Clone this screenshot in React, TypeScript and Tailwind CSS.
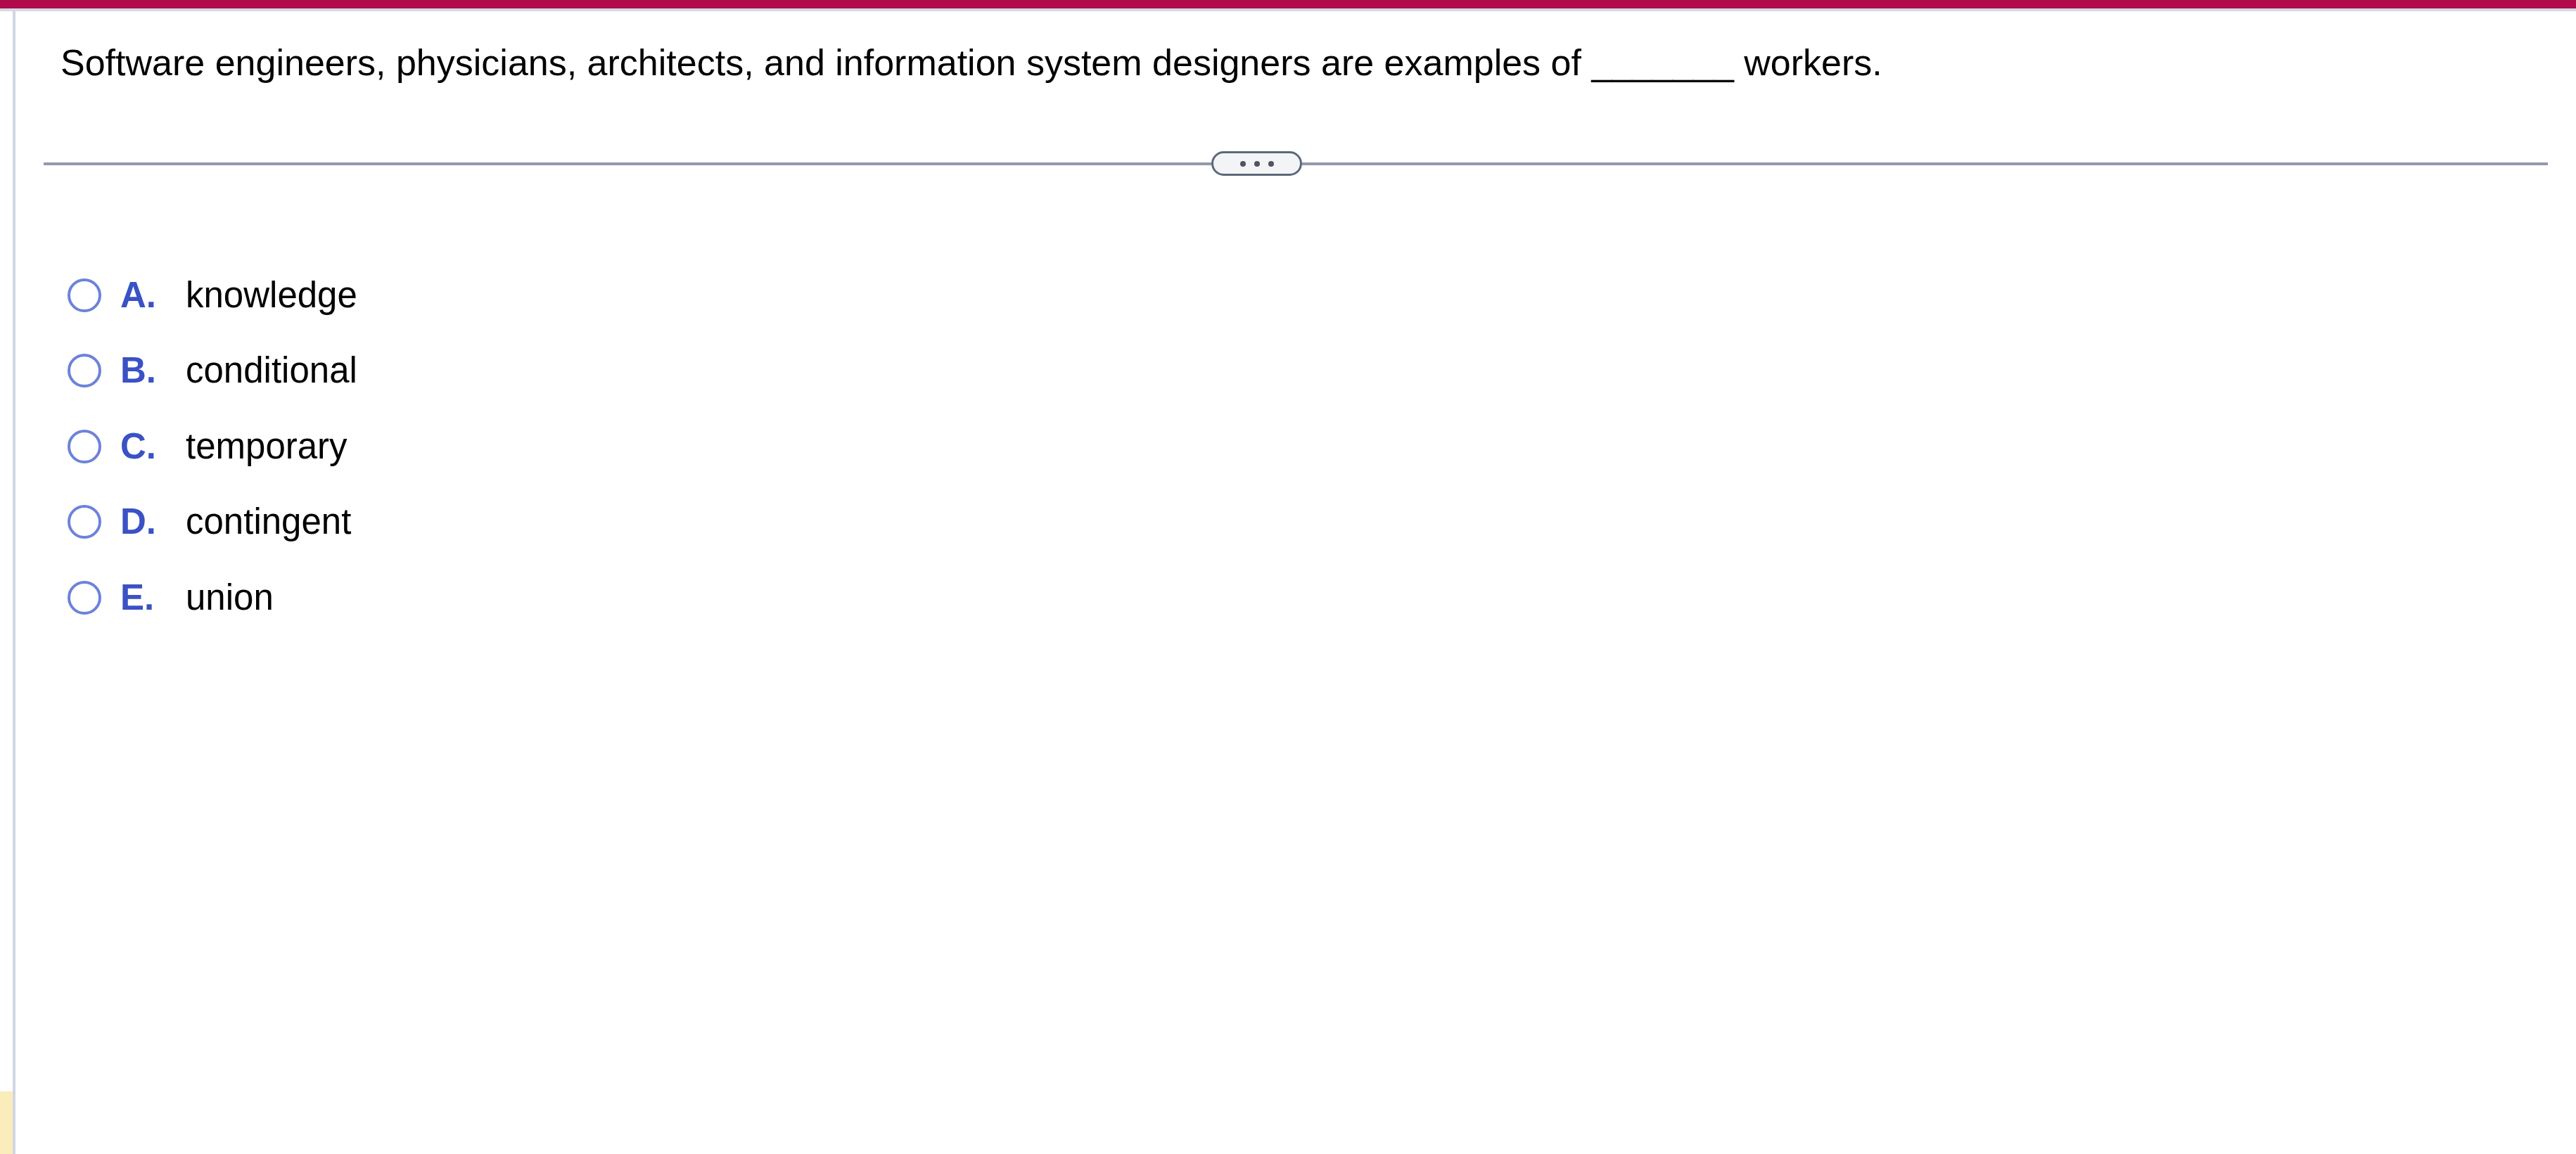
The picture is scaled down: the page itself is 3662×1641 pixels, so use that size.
// Multiple-choice question page: brand bar, left rail, question stem,
// collapsible divider and the lettered radio options.

const options = [
  { letter: "A.", text: "knowledge" },
  { letter: "B.", text: "conditional" },
  { letter: "C.", text: "temporary" },
  { letter: "D.", text: "contingent" },
  { letter: "E.", text: "union" },
];

function Divider() {
  return (
    <div className="flex h-[35px] items-center">
      <div className="h-[4px] w-[1660px] bg-[#9199ad]" />
      <button
        type="button"
        aria-label="Show more"
        className="flex h-[35px] w-[129px] shrink-0 items-center justify-center gap-[12px] rounded-full border-[3px] border-[#5d6879] bg-[#f3f4f6]"
      >
        <span className="h-[8px] w-[8px] rounded-full bg-[#4f5560]" />
        <span className="h-[8px] w-[8px] rounded-full bg-[#4f5560]" />
        <span className="h-[8px] w-[8px] rounded-full bg-[#4f5560]" />
      </button>
      <div className="h-[4px] flex-1 bg-[#9199ad]" />
    </div>
  );
}

export default function App() {
  return (
    <div className="flex min-h-screen flex-col bg-white font-['Liberation_Sans',Arial,sans-serif] text-black">
      <div className="h-[12px] shrink-0 bg-[#b00c4b]" />
      <div className="h-[4px] shrink-0 bg-[#d3d9e6]" />
      <div className="flex flex-1">
        {/* left rail */}
        <div className="flex w-[18px] shrink-0 flex-col justify-end">
          <div className="h-[89px] bg-[#fbedbb]" />
        </div>
        <div className="w-[4px] shrink-0 bg-[#cfd6e3]" />

        <main className="flex-1 pl-[40px] pr-[40px]">
          <p className="pl-[24px] pt-[44px] text-[52px] leading-[58px]">
            Software engineers, physicians, architects, and information system
            designers are examples of _______ workers.
          </p>

          <div className="mt-[97px]">
            <Divider />
          </div>

          <ul className="mt-[116px] flex flex-col">
            {options.map((o) => (
              <li key={o.letter} className="flex h-[107.5px] items-center pl-[34px]">
                <span className="h-[48px] w-[48px] shrink-0 rounded-full border-[4px] border-[#6c83da] bg-white" />
                <span className="ml-[27px] w-[93px] shrink-0 text-[51px] font-bold leading-[58px] text-[#3a52c4]">
                  {o.letter}
                </span>
                <span className="text-[51px] leading-[58px]">{o.text}</span>
              </li>
            ))}
          </ul>
        </main>
      </div>
    </div>
  );
}
